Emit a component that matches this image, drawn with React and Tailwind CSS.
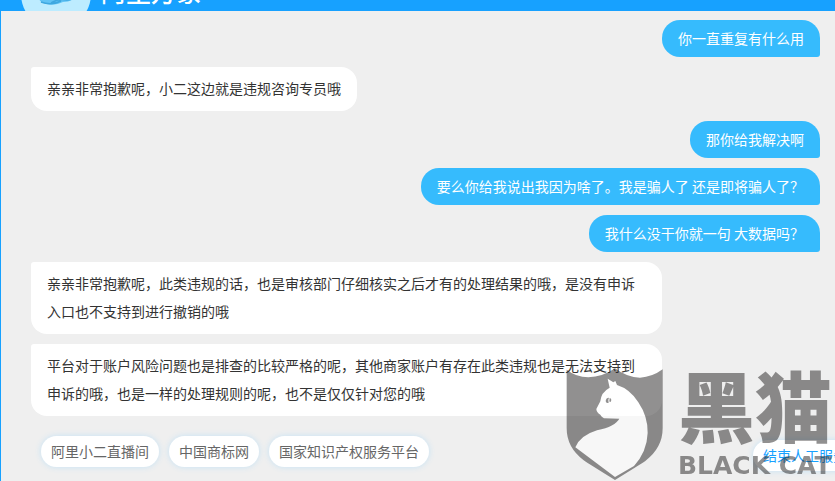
const messages = [
  { mine: true, text: '你一直重复有什么用' },
  { mine: false, text: '亲亲非常抱歉呢，小二这边就是违规咨询专员哦' },
  { mine: true, text: '那你给我解决啊' },
  { mine: true, text: '要么你给我说出我因为啥了。我是骗人了 还是即将骗人了？' },
  { mine: true, text: '我什么没干你就一句 大数据吗？' },
  {
    mine: false,
    text: '亲亲非常抱歉呢，此类违规的话，也是审核部门仔细核实之后才有的处理结果的哦，是没有申诉入口也不支持到进行撤销的哦',
  },
  {
    mine: false,
    text: '平台对于账户风险问题也是排查的比较严格的呢，其他商家账户有存在此类违规也是无法支持到申诉的哦，也是一样的处理规则的呢，也不是仅仅针对您的哦',
  },
];

const shortcuts = ['阿里小二直播间', '中国商标网', '国家知识产权服务平台'];

function Header() {
  return (
    <header className="-mt-[41px] flex h-[52px] shrink-0 items-start gap-[10px] overflow-hidden bg-[#17a1ff] pl-5">
      <svg className="size-[70px] shrink-0" viewBox="0 0 70 70" aria-hidden="true">
        <circle cx="35" cy="35" r="35" fill="#bdecff" />
        <path d="M18 30 Q36 22 54 34 Q54 43 42 43 Q32 48 22 44 Q16 42 18 30Z" fill="#62c4f5" />
        <path d="M20 43 Q30 47 40 42 M30 44 Q38 39 46 41 Q52 41 54 37" fill="none" stroke="#3fa8e0" strokeWidth="1.5" />
      </svg>
      <h1 className="pt-[18px] text-[25px] leading-[28px] font-medium text-white">阿里万象</h1>
    </header>
  );
}

function Message({ mine, text }) {
  return mine ? (
    <li className="self-end rounded-[18px] rounded-br-[3px] bg-[#36bbfd] px-4 py-2 leading-[21px] text-white">
      {text}
    </li>
  ) : (
    <li className="max-w-[631px] self-start rounded-2xl rounded-tl-[3px] bg-white px-4 pt-[7px] pb-[9px] leading-7 text-[#333]">
      {text}
    </li>
  );
}

const catOutline =
  'M143 41 L160 52 L166 48 L171 60 Q210 72 235 112 Q264 155 263 204 Q261 260 222 303 L165 336 L46 247 Q61 211 111 196 Q166 184 178 161 L132 160 Q124 155 121 149 Q109 142 109 132 L121 109 Q123 82 149 68 Z';

function Shield() {
  return (
    <svg className="h-[116px] w-[110px] shrink-0" viewBox="0 0 330 348" aria-hidden="true">
      <defs>
        <mask id="cat">
          <rect width="330" height="348" fill="#fff" />
          <path d={catOutline} fill="#000" />
          <path d="M137 108 Q138 98 147 98 Q143 105 146 113 Q138 116 137 108Z M149 99 Q157 102 152 110 Q149 112 148 108Z" fill="#fff" />
        </mask>
      </defs>
      <path d={catOutline} fill="#fff" />
      <path
        d="M20 14 Q48 36 85 37 Q128 36 165 10 Q202 38 240 38 Q277 36 308 13 L308 190 Q308 248 256 288 Q238 300 165 345 Q92 300 70 285 Q20 247 20 190Z"
        fill="#262424"
        mask="url(#cat)"
      />
    </svg>
  );
}

function Watermark() {
  return (
    <div className="pointer-events-none absolute right-0 bottom-0 flex w-[275px] whitespace-nowrap text-[#262424] opacity-50">
      <Shield />
      <div className="flex flex-col gap-[9px] pl-2">
        <span className="text-[77px] leading-[78px] font-black">黑猫</span>
        <span className="font-['DejaVu_Sans',sans-serif] text-[25px] leading-7 font-bold">BLACK CAT</span>
      </div>
    </div>
  );
}

export default function App() {
  return (
    <div
      lang="zh-CN"
      className="relative flex h-screen flex-col overflow-hidden border-l border-[#17a1ff] bg-[#efefef] font-['Noto_Sans_CJK_SC',sans-serif] text-sm"
    >
      <Header />
      <main>
        <ul className="flex flex-col gap-[10px] pt-[9px] pr-[15px] pl-[30px]">
          {messages.map((message) => (
            <Message key={message.text} {...message} />
          ))}
        </ul>
      </main>
      <footer className="flex items-start gap-[10px] pt-5 pl-10 whitespace-nowrap">
        {shortcuts.map((label) => (
          <button
            key={label}
            type="button"
            className="rounded-full bg-white px-[10px] py-[5px] leading-[21px] text-[#666] shadow-[0_0_6px_#c5e2f5]"
          >
            {label}
          </button>
        ))}
        <button
          type="button"
          className="mt-1 -mr-[22px] ml-auto rounded-full bg-white px-[10px] py-[5px] leading-[21px] text-[#17a1ff] shadow-[0_0_6px_#c5e2f5]"
        >
          结束人工服务
        </button>
      </footer>
      <Watermark />
    </div>
  );
}
